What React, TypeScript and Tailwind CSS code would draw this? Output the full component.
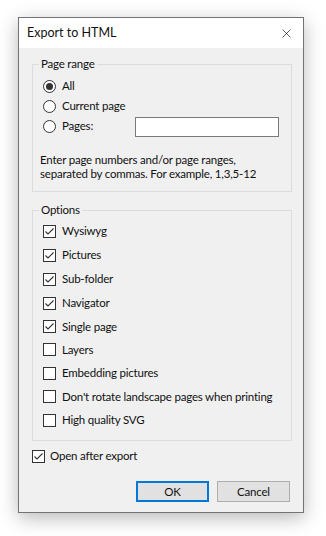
import { X } from "lucide-react";

const font = { fontFamily: 'Lato, "Segoe UI", sans-serif' };

const options: { label: string; checked: boolean; h: string }[] = [
	{ label: "Wysiwyg", checked: true, h: "h-[24px]" },
	{ label: "Pictures", checked: true, h: "h-[24px]" },
	{ label: "Sub-folder", checked: true, h: "h-[24px]" },
	{ label: "Navigator", checked: true, h: "h-[24px]" },
	{ label: "Single page", checked: true, h: "h-[23px]" },
	{ label: "Layers", checked: false, h: "h-[23px]" },
	{ label: "Embedding pictures", checked: false, h: "h-[24px]" },
	{ label: "Don't rotate landscape pages when printing", checked: false, h: "h-[23px]" },
	{ label: "High quality SVG", checked: false, h: "h-[24px]" },
];

function Radio({ checked }: { checked?: boolean }) {
	return (
		<span className="w-[13px] h-[13px] rounded-full border border-[#333333] bg-white flex items-center justify-center shrink-0">
			{checked && <span className="w-[7px] h-[7px] rounded-full bg-[#333333]" />}
		</span>
	);
}

function Checkbox({ checked }: { checked?: boolean }) {
	return (
		<span className="w-[13px] h-[13px] border border-[#333333] bg-white flex items-center justify-center shrink-0">
			{checked && (
				<svg width="11" height="11" viewBox="0 0 11 11" fill="none">
					<path d="M1.5 5.5 L4 8 L9.5 2.5" stroke="#333333" strokeWidth="1.1" />
				</svg>
			)}
		</span>
	);
}

export default function App() {
	return (
		<div className="w-[326px] h-[536px] bg-white pt-[17px] pl-[18px] text-[11.5px] tracking-[-0.2px] text-[#111111]" style={font}>
			<div className="w-[286px] h-[496px] border border-[#737373] bg-[#f0f0f0] flex flex-col shadow-[0_5px_18px_rgba(0,0,0,0.28)]">
				{/* Title bar */}
				<div className="h-[30px] bg-white flex items-center justify-between pl-[8px] pr-[9px]">
					<span className="text-[12.5px] tracking-normal leading-none">Export to HTML</span>
					<X className="w-[15px] h-[15px] text-black" strokeWidth={1} />
				</div>

				{/* Page range */}
				<fieldset className="mt-[8px] ml-[13px] w-[260px] border border-[#dcdcdc] pl-[10px] pr-[12px] pb-[10px]">
					<legend className="ml-[-4px] px-[2px] leading-[16px]">Page range</legend>
					<div className="mt-[4px] flex flex-col">
						<div className="h-[20px] flex items-center gap-[6px]">
							<Radio checked />
							<span>All</span>
						</div>
						<div className="h-[20px] flex items-center gap-[6px]">
							<Radio />
							<span>Current page</span>
						</div>
						<div className="h-[20px] flex items-center">
							<div className="w-[92px] flex items-center gap-[6px]">
								<Radio />
								<span>Pages:</span>
							</div>
							<input type="text" className="h-[20px] w-[144px] mt-[1px] border border-[#7a7a7a] bg-white outline-none" />
						</div>
					</div>
					<p className="mt-[17px] -ml-[3px] leading-[14px] whitespace-nowrap">
						Enter page numbers and/or page ranges,
						<br />
						separated by commas. For example, 1,3,5-12
					</p>
				</fieldset>

				{/* Options */}
				<fieldset className="mt-[10px] ml-[13px] w-[260px] border border-[#dcdcdc] pl-[10px] pb-[8px]">
					<legend className="ml-[-4px] px-[2px] leading-[16px]">Options</legend>
					<div className="mt-[1px] flex flex-col">
						{options.map((o) => (
							<div key={o.label} className={`${o.h} flex items-center gap-[6px]`}>
								<Checkbox checked={o.checked} />
								<span className="whitespace-nowrap">{o.label}</span>
							</div>
						))}
					</div>
				</fieldset>

				<div className="mt-[5px] ml-[13px] h-[20px] flex items-center gap-[5px]">
					<Checkbox checked />
					<span>Open after export</span>
				</div>

				<div className="mt-[15px] flex justify-end gap-[8px] pr-[13px]">
					<button type="button" className="w-[73px] h-[21px] bg-[#e1e1e1] border-2 border-[#0078d7] leading-none">
						OK
					</button>
					<button type="button" className="w-[73px] h-[21px] bg-[#e1e1e1] border border-[#adadad] leading-none">
						Cancel
					</button>
				</div>
			</div>
		</div>
	);
}
